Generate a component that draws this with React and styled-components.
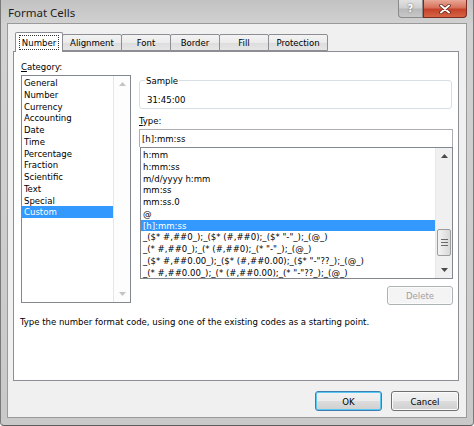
import React from 'react'
import { styled, createGlobalStyle } from 'styled-components'

const GlobalStyle = createGlobalStyle`
    html, body {
        margin: 0;
        padding: 0;
        background: #ffffff;
    }
    body {
        font-family: 'DejaVu Sans Condensed', 'DejaVu Sans', sans-serif;
        font-size: 9.5px;
        color: #000;
    }
`

const Window = styled.div`
    width: 474px;
    height: 426px;
    box-sizing: border-box;
    display: flex;
    flex-direction: column;
    background: linear-gradient(180deg, #c2c2c2 0%, #d2d2d2 6%, #c9c9c9 100%);
    border-left: 1px solid #7a7a7a;
    border-right: 1px solid #7a7a7a;
    border-bottom: 1px solid #5c5c5c;
    border-radius: 0 0 4px 4px;
    padding: 0 6px 7px 6px;
`

const TitleBar = styled.div`
    height: 25px;
    display: flex;
    align-items: flex-start;
    justify-content: space-between;
`

const Title = styled.span`
    font-family: 'Noto Sans', sans-serif;
    font-size: 11.5px;
    color: #1e1e1e;
    margin: 5px 0 0 1px;
`

const Caption = styled.div`
    display: flex;
`

const CaptionButton = styled.div`
    width: ${p => p.$w}px;
    height: 18px;
    box-sizing: border-box;
    display: flex;
    align-items: center;
    justify-content: center;
    border: 1px solid ${p => (p.$close ? '#7a2a20' : '#8a8a8a')};
    border-top: none;
    border-radius: ${p => (p.$close ? '0 0 4px 0' : '0 0 0 4px')};
    background: ${p =>
        p.$close
            ? 'linear-gradient(180deg, #e8a896 0%, #d8705a 45%, #c5422a 55%, #d66444 100%)'
            : 'linear-gradient(180deg, #e2e2e2 0%, #cfcfcf 45%, #b9b9b9 55%, #c8c8c8 100%)'};
    color: #fff;
    font-family: 'DejaVu Sans', sans-serif;
    font-weight: bold;
    font-size: 10px;
    text-shadow: 0 0 2px #555;
`

const Client = styled.div`
    flex: 1;
    background: #f0f0f0;
    border: 1px solid #9a9a9a;
    display: flex;
    flex-direction: column;
    padding: 7px 7px 6px 5px;
`

const TabRow = styled.div`
    display: flex;
    align-items: flex-end;
    height: 20px;
    padding-left: 2px;
    position: relative;
    z-index: 1;
`

const Tab = styled.div`
    box-sizing: border-box;
    width: ${p => p.$w}px;
    height: ${p => (p.$active ? 20 : 17)}px;
    margin-bottom: ${p => (p.$active ? -1 : 0)}px;
    margin-left: ${p => (p.$active ? 0 : -1)}px;
    display: flex;
    align-items: center;
    justify-content: center;
    border: 1px solid #8c8e94;
    border-bottom: ${p => (p.$active ? 'none' : '1px solid #8c8e94')};
    border-radius: 2px 2px 0 0;
    background: ${p =>
        p.$active ? '#ffffff' : 'linear-gradient(180deg, #f3f3f3 0%, #ebebeb 50%, #dcdcdc 51%, #e6e6e6 100%)'};
`

const FocusLabel = styled.span`
    outline: 1px dotted #333;
    outline-offset: 1px;
    padding: 0 1px;
`

const Panel = styled.div`
    height: 330px;
    box-sizing: border-box;
    background: #fff;
    border: 1px solid #8c8e94;
    padding: 8px 6px 0 6px;
    display: flex;
    flex-direction: column;
`

const Columns = styled.div`
    display: flex;
    gap: 8px;
`

const LeftCol = styled.div`
    width: 111px;
    display: flex;
    flex-direction: column;
`

const RightCol = styled.div`
    flex: 1;
    display: flex;
    flex-direction: column;
    padding-top: 20px;
    margin-right: -1px;
`

const Label = styled.div`
    line-height: 13px;
    margin-left: ${p => p.$indent || 0}px;
    margin-top: ${p => p.$mt || 0}px;
`

const U = styled.span`
    text-decoration: underline;
`

const ListBox = styled.div`
    box-sizing: border-box;
    height: ${p => p.$h}px;
    margin-top: ${p => p.$mt || 0}px;
    margin-left: ${p => p.$ml || 0}px;
    border: 1px solid #828790;
    display: flex;
    background: #fff;
    overflow: hidden;
`

const Items = styled.div`
    flex: 1;
    padding-top: ${p => p.$pt || 0}px;
    overflow: hidden;
`

const Item = styled.div`
    height: 11.75px;
    line-height: 11.75px;
    padding-left: 2px;
    white-space: pre;
    background: ${p => (p.$selected ? '#3399ff' : 'transparent')};
    color: ${p => (p.$selected ? '#fff' : '#000')};
`

const Scroll = styled.div`
    width: 16px;
    display: flex;
    flex-direction: column;
    background: ${p => (p.$disabled ? '#fdfdfd' : '#f0f0f0')};
    border-left: 1px solid ${p => (p.$disabled ? '#e6e6e6' : '#e8e8e8')};
`

const Arrow = styled.div`
    height: 16px;
    display: flex;
    align-items: center;
    justify-content: center;
`

const Track = styled.div`
    flex: 1;
    display: flex;
    flex-direction: column;
    padding-top: ${p => p.$offset || 0}px;
`

const Thumb = styled.div`
    height: 27px;
    margin: 0 1px;
    box-sizing: border-box;
    border: 1px solid #9c9c9c;
    border-radius: 2px;
    background: linear-gradient(90deg, #f4f4f4 0%, #e6e6e6 50%, #d8d8d8 100%);
    display: flex;
    align-items: center;
    justify-content: center;
`

const GroupBox = styled.div`
    height: 29px;
    box-sizing: border-box;
    border: 1px solid #d5dfe5;
    border-radius: 3px;
    margin-right: 1px;
    padding: 13px 0 0 7px;
    position: relative;
`

const Legend = styled.span`
    position: absolute;
    left: 5px;
    top: -6px;
    padding: 0 1px;
    line-height: 12px;
    background: #fff;
`

const SampleValue = styled.div`
    line-height: 12px;
`

const TextInput = styled.div`
    box-sizing: border-box;
    height: 18px;
    margin-top: 2px;
    border: 1px solid #abadb3;
    border-bottom: none;
    padding-left: 2px;
    line-height: 17px;
`

const ButtonRow = styled.div`
    display: flex;
    justify-content: flex-end;
    gap: 9px;
    margin-top: ${p => p.$mt || 0}px;
`

const Button = styled.div`
    box-sizing: border-box;
    width: ${p => p.$w}px;
    height: ${p => p.$h || 20}px;
    display: flex;
    align-items: center;
    justify-content: center;
    border-radius: 3px;
    border: 1px solid ${p => (p.$disabled ? '#adb2b5' : p.$default ? '#3c7fb1' : '#707070')};
    box-shadow: ${p => (p.$default ? 'inset 0 0 0 1px #58c7f4' : 'inset 0 0 0 1px #fbfbfb')};
    background: ${p =>
        p.$disabled ? '#f4f4f4' : 'linear-gradient(180deg, #f2f2f2 0%, #ebebeb 50%, #dddddd 51%, #cfcfcf 100%)'};
    color: ${p => (p.$disabled ? '#a0a0a0' : '#000')};
`

const Hint = styled.div`
    margin-top: 11px;
    line-height: 12px;
`

const ArrowIcon = ({ up, color = '#a8a8a8' }) => (
    <svg width="7" height="4" viewBox="0 0 7 4">
        <path d={up ? 'M0 4 L3.5 0 L7 4 Z' : 'M0 0 L3.5 4 L7 0 Z'} fill={color} />
    </svg>
)

const Grip = () => (
    <svg width="7" height="7" viewBox="0 0 7 7">
        <path d="M0 0.5 H7 M0 3.5 H7 M0 6.5 H7" stroke="#6a6a6a" strokeWidth="1" />
    </svg>
)

const CloseGlyph = () => (
    <svg width="12" height="10" viewBox="0 0 12 10">
        <path d="M2 1.5 L10 8.5 M10 1.5 L2 8.5" stroke="#5a1a10" strokeWidth="3.4" strokeLinecap="round" />
        <path d="M2 1.5 L10 8.5 M10 1.5 L2 8.5" stroke="#ffffff" strokeWidth="2" strokeLinecap="round" />
    </svg>
)

const tabs = [
    { name: 'Number', w: 48, active: true },
    { name: 'Alignment', w: 60 },
    { name: 'Font', w: 50 },
    { name: 'Border', w: 50 },
    { name: 'Fill', w: 50 },
    { name: 'Protection', w: 60 }
]

const categories = [
    'General', 'Number', 'Currency', 'Accounting', 'Date', 'Time',
    'Percentage', 'Fraction', 'Scientific', 'Text', 'Special', 'Custom'
]

const formats = [
    'h:mm',
    'h:mm:ss',
    'm/d/yyyy h:mm',
    'mm:ss',
    'mm:ss.0',
    '@',
    '[h]:mm:ss',
    '_($* #,##0_);_($* (#,##0);_($* "-"_);_(@_)',
    '_(* #,##0_);_(* (#,##0);_(* "-"_);_(@_)',
    '_($* #,##0.00_);_($* (#,##0.00);_($* "-"??_);_(@_)',
    '_(* #,##0.00_);_(* (#,##0.00);_(* "-"??_);_(@_)'
]

export default function App() {
    return (
        <>
            <GlobalStyle />
            <Window>
                <TitleBar>
                    <Title>Format Cells</Title>
                    <Caption>
                        <CaptionButton $w={25}>?</CaptionButton>
                        <CaptionButton $w={44} $close>
                            <CloseGlyph />
                        </CaptionButton>
                    </Caption>
                </TitleBar>
                <Client>
                    <TabRow>
                        {tabs.map(t => (
                            <Tab key={t.name} $w={t.w} $active={t.active}>
                                {t.active ? <FocusLabel>{t.name}</FocusLabel> : t.name}
                            </Tab>
                        ))}
                    </TabRow>
                    <Panel>
                        <Columns>
                            <LeftCol>
                                <Label $indent={1}>
                                    <U>C</U>ategory:
                                </Label>
                                <ListBox $h={228} $mt={2} $ml={1}>
                                    <Items $pt={1}>
                                        {categories.map(c => (
                                            <Item key={c} $selected={c === 'Custom'}>{c}</Item>
                                        ))}
                                    </Items>
                                    <Scroll $disabled>
                                        <Arrow><ArrowIcon up color="#c4c4c4" /></Arrow>
                                        <Track />
                                        <Arrow><ArrowIcon color="#c4c4c4" /></Arrow>
                                    </Scroll>
                                </ListBox>
                            </LeftCol>
                            <RightCol>
                                <GroupBox>
                                    <Legend>Sample</Legend>
                                    <SampleValue>31:45:00</SampleValue>
                                </GroupBox>
                                <Label $mt={5}>
                                    <U>T</U>ype:
                                </Label>
                                <TextInput>[h]:mm:ss</TextInput>
                                <ListBox $h={132} $ml={1}>
                                    <Items $pt={1}>
                                        {formats.map(f => (
                                            <Item key={f} $selected={f === '[h]:mm:ss'}>{f}</Item>
                                        ))}
                                    </Items>
                                    <Scroll>
                                        <Arrow><ArrowIcon up color="#4a4a4a" /></Arrow>
                                        <Track $offset={65}>
                                            <Thumb><Grip /></Thumb>
                                        </Track>
                                        <Arrow><ArrowIcon color="#4a4a4a" /></Arrow>
                                    </Scroll>
                                </ListBox>
                                <ButtonRow $mt={7}>
                                    <Button $w={66} $h={19} $disabled>Delete</Button>
                                </ButtonRow>
                            </RightCol>
                        </Columns>
                        <Hint>Type the number format code, using one of the existing codes as a starting point.</Hint>
                    </Panel>
                    <ButtonRow $mt={10}>
                        <Button $w={67} $default>OK</Button>
                        <Button $w={68}>Cancel</Button>
                    </ButtonRow>
                </Client>
            </Window>
        </>
    )
}
